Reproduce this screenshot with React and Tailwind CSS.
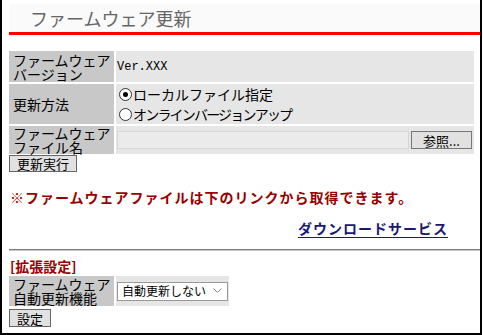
import React from 'react';

// Firmware update page: header, settings table, download note, extended settings

const jp = { fontFamily: '"Noto Sans CJK JP", "Noto Sans", sans-serif' };

function Radio({ checked }) {
  return (
    <span className="relative inline-flex w-[13px] h-[13px] rounded-full border border-[#333] bg-white items-center justify-center mr-[1px]">
      {checked && <span className="w-[5px] h-[5px] rounded-full bg-black" />}
    </span>
  );
}

function Btn({ children, className = '' }) {
  return (
    <button
      className={`flex items-center justify-center bg-[#e1e1e1] border border-[#666] text-[13px] leading-[13px] text-black ${className}`}
      style={jp}
    >
      {children}
    </button>
  );
}

function Label({ children, h }) {
  return (
    <div className={`bg-[#c8c8c8] flex flex-col justify-center pl-[4px] text-[14px] leading-[14px] text-black ${h}`}>
      {children}
    </div>
  );
}

export default function App() {
  return (
    <div className="w-[483px] h-[335px] bg-white">
      <div className="w-[482px] h-[335px] border-l-2 border-r-2 border-b-2 border-black pt-[4px] flex flex-col" style={jp}>
        {/* Header */}
        <div className="ml-[7px]">
          <div className="h-[28px] bg-[#fafafa] flex items-center pl-[21px] text-[18px] leading-[18px] text-[#666]">
            ファームウェア更新
          </div>
          <div className="h-[3px] bg-[#ff0000]" />
        </div>

        {/* Main table */}
        <div className="ml-[7px] mt-[16px] w-[465px] grid grid-cols-[105px_358px] gap-[2px]">
          <Label h="h-[31px]">
            <span>ファームウェア</span>
            <span>バージョン</span>
          </Label>
          <div className="bg-[#e6e6e6] flex items-center pl-[1px] text-[12px] text-black" style={{ fontFamily: '"Liberation Mono", monospace' }}>
            Ver.XXX
          </div>

          <Label h="h-[40px]">
            <span>更新方法</span>
          </Label>
          <div className="bg-[#e6e6e6] flex flex-col justify-center pl-[3px] text-[14px] leading-[14px] text-black">
            <div className="h-[20px] flex items-center">
              <Radio checked />
              <span>ローカルファイル指定</span>
            </div>
            <div className="h-[20px] flex items-center">
              <Radio />
              <span className="tracking-[-1.8px]">オンラインバージョンアップ</span>
            </div>
          </div>

          <Label h="h-[28px]">
            <span>ファームウェア</span>
            <span>ファイル名</span>
          </Label>
          <div className="bg-[#e6e6e6] flex items-center pl-[1px] gap-[2px]">
            <div className="w-[292px] h-[18px] bg-[#ebebeb] border border-[#d6d6d6]" />
            <Btn className="w-[61px] h-[18px] border-[#777]">参照...</Btn>
          </div>
        </div>

        <div className="ml-[7px] mt-[1px]">
          <Btn className="w-[68px] h-[17px]">更新実行</Btn>
        </div>

        {/* Notice */}
        <div className="ml-[8px] mt-[18px] text-[14px] leading-[14px] font-bold tracking-[1px] text-[#990000]">
          ※ファームウェアファイルは下のリンクから取得できます。
        </div>
        <div className="ml-[296px] mt-[17px] text-[14px] leading-[14px] font-bold tracking-[1px]">
          <a className="text-[#191970] underline underline-offset-[3px]">ダウンロードサービス</a>
        </div>

        <div className="ml-[7px] mt-[14px] border-t border-[#808080] border-b border-b-[#c8c8c8]" />

        {/* Extended settings */}
        <div className="ml-[8px] mt-[8px] text-[14px] leading-[14px] font-bold text-[#990000]">
          [拡張設定]
        </div>
        <div className="ml-[7px] mt-[3px] grid grid-cols-[105px_113px] gap-[2px] w-[220px]">
          <Label h="h-[30px]">
            <span>ファームウェア</span>
            <span>自動更新機能</span>
          </Label>
          <div className="bg-[#e6e6e6] flex items-center pl-[1px]">
            <div className="w-[111px] h-[19px] bg-white border border-[#999] flex items-center pl-[4px] pr-[5px] text-[12px] leading-[12px] text-black">
              <span className="flex-1">自動更新しない</span>
              <svg width="9" height="6" viewBox="0 0 9 6">
                <path d="M0.5 0.5 L4.5 4.5 L8.5 0.5" fill="none" stroke="#888" strokeWidth="1" />
              </svg>
            </div>
          </div>
        </div>
        <div className="ml-[7px] mt-[3px]">
          <Btn className="w-[42px] h-[18px]">設定</Btn>
        </div>
      </div>
    </div>
  );
}
